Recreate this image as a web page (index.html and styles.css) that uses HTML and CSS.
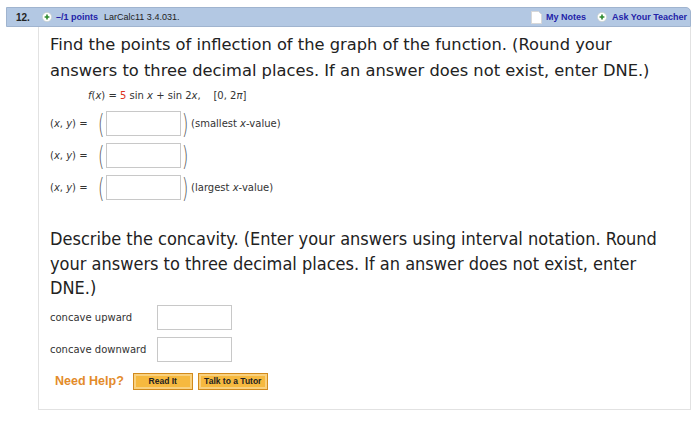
FILE: index.html
```html
<!DOCTYPE html>
<html>
<head>
<meta charset="utf-8">
<link rel="stylesheet" href="styles.css">
</head>
<body>
<div class="q">
  <div class="qbar">
    <span class="num">12.</span>
    <span class="plus"><svg width="10" height="10" viewBox="0 0 10 10"><circle cx="5" cy="5" r="4.6" fill="#fff" stroke="#c8d0c8" stroke-width="0.6"/><path d="M5 2.6v4.8M2.6 5h4.8" stroke="#2e8b2e" stroke-width="1.6"/></svg></span>
    <span class="pts">–/1 points</span>
    <span class="ref">LarCalc11 3.4.031.</span>
    <span class="spacer"></span>
    <span class="note"><svg width="11" height="13" viewBox="0 0 11 13"><path d="M0.5 0.5h7l3 3v9h-10z" fill="#fff" stroke="#d8d8d8"/></svg></span>
    <span class="link">My Notes</span>
    <span class="plus plus2"><svg width="10" height="10" viewBox="0 0 10 10"><circle cx="5" cy="5" r="4.6" fill="#fff" stroke="#c8d0c8" stroke-width="0.6"/><path d="M5 2.6v4.8M2.6 5h4.8" stroke="#2e8b2e" stroke-width="1.6"/></svg></span>
    <span class="link">Ask Your Teacher</span>
  </div>
  <div class="qbody">
    <p class="lead">Find the points of inflection of the graph of the function. (Round your answers to three decimal places. If an answer does not exist, enter DNE.)</p>
    <div class="fn"><i>f</i>(<i>x</i>) = <span class="red">5</span> sin <i>x</i> + sin 2<i>x</i>, &nbsp;&nbsp; [0, 2<i>π</i>]</div>
    <div class="rows">
      <div class="row"><span class="lbl">(<i>x</i>, <i>y</i>) =</span><span class="paren">(</span><span class="box"></span><span class="paren">)</span><span class="hint">(smallest <i>x</i>-value)</span></div>
      <div class="row"><span class="lbl">(<i>x</i>, <i>y</i>) =</span><span class="paren">(</span><span class="box"></span><span class="paren">)</span></div>
      <div class="row"><span class="lbl">(<i>x</i>, <i>y</i>) =</span><span class="paren">(</span><span class="box"></span><span class="paren">)</span><span class="hint">(largest <i>x</i>-value)</span></div>
    </div>
    <p class="lead2">Describe the concavity. (Enter your answers using interval notation. Round your answers to three decimal places. If an answer does not exist, enter DNE.)</p>
    <div class="cgrid">
      <span class="clbl">concave upward</span><span class="box"></span>
      <span class="clbl">concave downward</span><span class="box"></span>
    </div>
    <div class="help">
      <span class="need">Need Help?</span>
      <span class="btn b1">Read It</span>
      <span class="btn b2">Talk to a Tutor</span>
    </div>
  </div>
</div>
</body>
</html>
```
FILE: styles.css
```css
html, body { margin: 0; padding: 0; background: #fff; }
body { padding: 7px 9px 0 6px; font-family: "DejaVu Sans", Verdana, sans-serif; color: #222; }
.q { width: 685px; }
.qbar {
  display: flex; align-items: center;
  background: #b3c8e3; border: 1px solid #a0b4cf; border-top-right-radius: 5px;
  font-family: "Liberation Sans", Arial, sans-serif; font-size: 9px; font-weight: bold;
  padding: 0 3px 0 9px; box-sizing: border-box; height: 20px;
}
.num { color: #222; width: 26px; font-size: 10px; }
.plus { display: inline-flex; margin-right: 4px; }
.pts { color: #2323a8; margin-right: 6px; }
.ref { color: #222; font-weight: normal; }
.spacer { flex: 1; }
.note { display: inline-flex; margin-right: 4px; }
.link { color: #2323a8; }
.plus2 { margin-left: 11px; margin-right: 5px; }
.qbody {
  margin-left: 32px; border: 1px solid #e2e2e2; border-top: none;
  padding: 5px 11px 16px 11px; height: 361px; box-sizing: content-box;
}
.lead { margin: 0; font-size: 16.3px; line-height: 26px; color: #222; max-width: 612px; }
.fn { font-size: 10px; margin: 6px 0 0 38px; color: #333; }
.red { color: #d32; }
.rows { margin-top: 10px; display: flex; flex-direction: column; gap: 7px; }
.row { display: flex; align-items: center; height: 25px; font-size: 10px; color: #333; }
.lbl { width: 46px; }
.paren { font-size: 27px; font-weight: 100; transform: scaleX(0.6); color: #555; line-height: 25px; font-family: "DejaVu Sans", sans-serif; }
.box { display: inline-block; width: 73px; height: 23px; border: 1px solid #c8c8c8; background: #fff; }
.row .box { margin: 0 -1px; }
.hint { margin-left: 1px; }
.lead2 { margin: 27px 0 0 0; font-family: "DejaVu Sans Condensed", Tahoma, sans-serif; font-size: 18px; line-height: 24.5px; color: #222; max-width: 625px; }
.cgrid { display: grid; grid-template-columns: 107px 76px; row-gap: 7px; align-items: center; margin-top: 4px; font-size: 10px; color: #333; }
.help { display: flex; align-items: center; margin-top: 11px; padding-left: 5px; }
.need { font-family: "Liberation Sans", Arial, sans-serif; font-weight: bold; font-size: 12.5px; color: #e38b2a; margin-right: 9px; }
.btn {
  font-family: "Liberation Sans", Arial, sans-serif; font-weight: bold; font-size: 8.5px; color: #222;
  background: #f6b93f; border: 1px solid #d28a1c; box-shadow: inset 0 0 0 2px #f9d17f;
  height: 15px; line-height: 15px; text-align: center; margin-right: 5px;
}
.b1 { width: 58px; }
.b2 { width: 68px; }
```
